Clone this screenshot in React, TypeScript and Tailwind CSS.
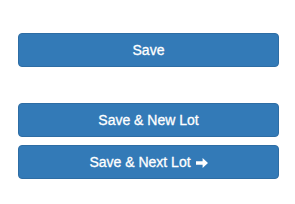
import React from "react";

const btn =
  "block w-full h-[34px] rounded-[4px] border border-[#2e6da4] bg-[#337ab7] text-white text-[14px] leading-[20px] px-3 py-[6px] text-center whitespace-nowrap [-webkit-text-stroke:0.3px_white]";

export default function App() {
  return (
    <div
      className="w-[295px] h-[204px] bg-white pt-[33px] pl-[18px]"
      style={{ fontFamily: '"Liberation Sans", Arial, sans-serif' }}
    >
      <div className="w-[261px] flex flex-col">
        <button className={btn}>Save</button>
        <div className="h-[36px]" />
        <button className={btn}>Save &amp; New Lot</button>
        <div className="h-[8px]" />
        <button className={btn}>
          Save &amp; Next Lot
          <svg
            width="12"
            height="10"
            viewBox="0 0 12 10"
            className="inline-block align-[-0.5px] ml-[5px]"
          >
            <path d="M0 3.3h6.6V0L12 5 6.6 10V6.7H0z" fill="white" />
          </svg>
        </button>
      </div>
    </div>
  );
}
